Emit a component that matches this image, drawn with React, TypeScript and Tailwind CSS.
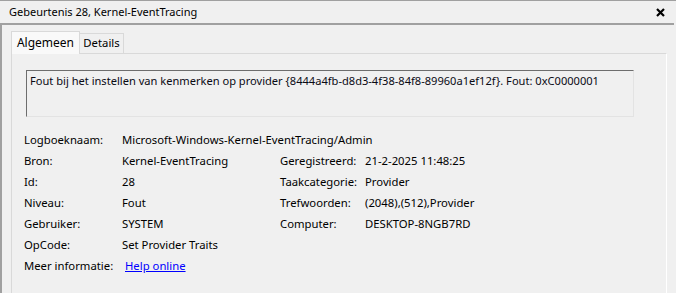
import React from 'react';

const rows = [
  { label: 'Logboeknaam:', value: 'Microsoft-Windows-Kernel-EventTracing/Admin' },
  { label: 'Bron:', value: 'Kernel-EventTracing', label2: 'Geregistreerd:', value2: '21-2-2025 11:48:25' },
  { label: 'Id:', value: '28', label2: 'Taakcategorie:', value2: 'Provider' },
  { label: 'Niveau:', value: 'Fout', label2: 'Trefwoorden:', value2: '(2048),(512),Provider' },
  { label: 'Gebruiker:', value: 'SYSTEM', label2: 'Computer:', value2: 'DESKTOP-8NGB7RD' },
  { label: 'OpCode:', value: 'Set Provider Traits' },
];

export default function App() {
  return (
    <div
      className="w-[676px] h-[293px] overflow-hidden flex flex-col bg-[#f0f0f0] border-t border-[#a0a0a0] text-[11.3px] text-black whitespace-nowrap"
      style={{ fontFamily: '"Noto Sans", "Segoe UI", sans-serif' }}
    >
      {/* Title bar */}
      <div className="h-[22px] shrink-0 flex items-center justify-between pl-[9px] pr-[11px]">
        <span className="text-[11px]">Gebeurtenis 28, Kernel-EventTracing</span>
        <svg width="9" height="9" viewBox="0 0 9 9">
          <path d="M1 1 L8 8 M8 1 L1 8" stroke="#000" strokeWidth="2.2" />
        </svg>
      </div>

      {/* Body */}
      <div className="flex-1 min-h-0 overflow-hidden mr-[2px] border-t-2 border-l-2 border-[#a0a0a0] pl-[9px] pt-[6px]">
        {/* Tabs */}
        <div className="flex items-end h-[22px]">
          <div className="h-[23px] w-[69px] flex items-center justify-center bg-[#f9f9f9] border border-b-0 border-[#d9d9d9] relative top-px text-[12px] z-10">
            Algemeen
          </div>
          <div className="h-[20px] w-[44px] flex items-center justify-center border border-l-0 border-b-0 border-[#d9d9d9] bg-[#f0f0f0]">
            Details
          </div>
        </div>

        {/* Panel */}
        <div className="w-[656px] h-[260px] border border-[#d9d9d9] border-r-[#ffffff] bg-[#f0f0f0] pl-[14px] pt-[16px]">
          <div className="w-[608px] h-[47px] border border-t-[#6d6d6d] border-l-[#6d6d6d] border-r-[#e3e3e3] border-b-[#e3e3e3] px-[3px] pt-[2px] leading-[16px] text-[11.1px] text-[#0a0a14]">
            Fout bij het instellen van kenmerken op provider {'{'}8444a4fb-d8d3-4f38-84f8-89960a1ef12f{'}'}. Fout: 0xC0000001
          </div>

          <div className="mt-[13px] flex flex-col -ml-[2px]">
            {rows.map((r) => (
              <div key={r.label} className="flex h-[21px] items-center">
                <span className="w-[98px]">{r.label}</span>
                <span className="w-[158px]">{r.value}</span>
                {r.label2 && (
                  <>
                    <span className="w-[85px]">{r.label2}</span>
                    <span>{r.value2}</span>
                  </>
                )}
              </div>
            ))}
            <div className="flex h-[21px] items-center">
              <span className="w-[101px]">Meer informatie:</span>
              <span className="text-[#0000ff] underline">Help online</span>
            </div>
          </div>
        </div>
      </div>
    </div>
  );
}
